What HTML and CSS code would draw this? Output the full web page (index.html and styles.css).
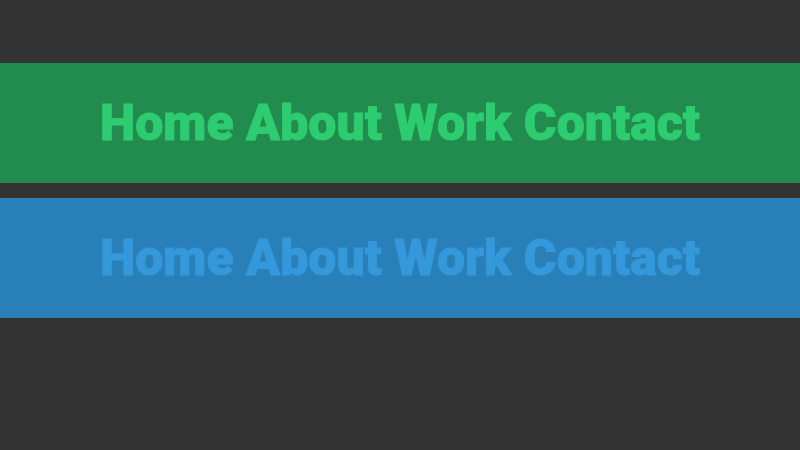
FILE: index.html
```html
<!DOCTYPE html>
<html>
<head>
<meta charset="utf-8">
<link rel="stylesheet" href="styles.css">
</head>
<body>
<div class="page">
  <nav class="bar bar-green">Home About Work Contact</nav>
  <nav class="bar bar-blue">Home About Work Contact</nav>
</div>
</body>
</html>
```
FILE: styles.css
```css
html, body {
  margin: 0;
  padding: 0;
  background: #333333;
  width: 800px;
  height: 450px;
  overflow: hidden;
}
.page {
  display: flex;
  flex-direction: column;
  gap: 15px;
  padding-top: 63px;
}
.bar {
  height: 120px;
  display: flex;
  align-items: center;
  justify-content: center;
  font-family: Roboto, "Liberation Sans", sans-serif;
  font-weight: 900;
  font-size: 50px;
  -webkit-text-stroke: 0.8px currentColor;
}
.bar-green {
  background: #228c4f;
  color: #2ecc71;
}
.bar-blue {
  background: #2980b9;
  color: #3498db;
}
```
